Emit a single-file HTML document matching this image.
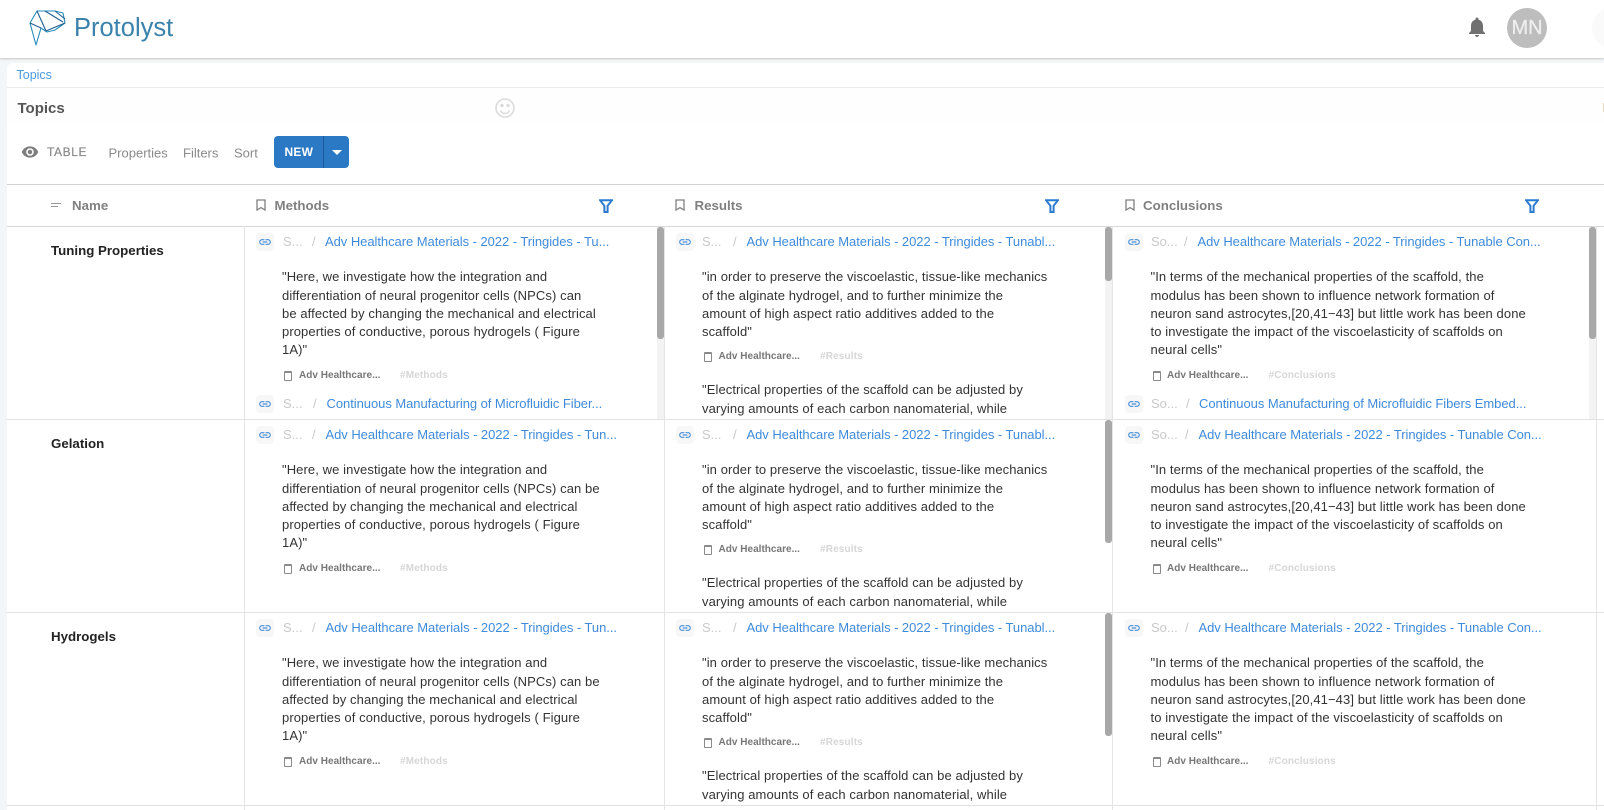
<!DOCTYPE html>
<html><head><meta charset="utf-8"><title>Protolyst</title>
<style>
html,body{margin:0;padding:0;width:1604px;height:810px;overflow:hidden;background:#f3f6f8;font-family:"Liberation Sans",Arial,sans-serif}
.a,.r span,.r i{position:absolute;white-space:nowrap}
#top{position:absolute;left:0;top:0;width:1604px;height:58px;background:#fff;box-shadow:0 1px 2px rgba(0,0,0,.2)}
#card{position:absolute;left:7px;top:63px;width:1597px;height:747px;background:#fff;border-top-left-radius:6px}
.h{position:absolute;height:1px;left:7px;width:1597px}
.v{position:absolute;width:1px;background:#e4e4e4;top:226px;height:584px}
.r{position:absolute;left:0;width:1604px;height:192px;overflow:hidden}
.chip{width:18px;height:18px;background:#f7f7f7;border-radius:4px;top:6px}
.chip svg{position:absolute;left:2px;top:2px;width:14px;height:14px;fill:#4a90d9}
.so{top:6px;line-height:18px;font-size:13px;color:#c9c9c9}
.l{top:6px;line-height:18px;font-size:13px;color:#3f8bdb;letter-spacing:-.05px}
.q{line-height:18px;font-size:13px;color:#333;letter-spacing:.09px}
.m{line-height:14px;font-size:10px;font-weight:bold;color:#777;letter-spacing:.02px;margin-top:1px}
.t{line-height:14px;font-size:10px;font-weight:bold;color:#d6d6d6;letter-spacing:.15px;margin-top:1px}
.sb{width:7px;background:#a8a8a8;border-radius:3px;top:0}
.tr{width:7px;background:#f3f3f3;top:0;height:192px}
.n{left:51px;top:15px;line-height:18px;font-size:13.3px;font-weight:bold;color:#222}
.bi{width:8px;height:10px;border:1px solid #8a8a8a;border-top:2px solid #8a8a8a;border-radius:1px;box-sizing:border-box;margin-top:1px}
.th{position:absolute;top:197px;line-height:18px;font-size:13.3px;font-weight:bold;color:#808080}
.tb{position:absolute;top:153px;transform:translateY(-50%);font-size:13px;color:#8a8a8a;white-space:nowrap}
svg{display:block}
</style></head><body>
<svg width="0" height="0" style="position:absolute"><defs>
<symbol id="lk" viewBox="0 0 24 24"><path d="M3.9 12c0-1.71 1.39-3.1 3.1-3.1h4V7H7c-2.76 0-5 2.24-5 5s2.24 5 5 5h4v-1.9H7c-1.71 0-3.1-1.39-3.1-3.1zM8 13h8v-2H8v2zm9-6h-4v1.9h4c1.71 0 3.1 1.39 3.1 3.1s-1.39 3.1-3.1 3.1h-4V17h4c2.76 0 5-2.24 5-5s-2.24-5-5-5z"/></symbol>
<symbol id="fl" viewBox="0 0 14 14"><path d="M1 1.2H13L8.6 6.8V13H5.4V6.8Z" fill="none" stroke="#2b7bd0" stroke-width="2"/></symbol>
<symbol id="bm" viewBox="0 0 10 12"><path d="M1 1H9V11L5 8.6 1 11Z" fill="none" stroke="#808080" stroke-width="1.3"/></symbol>
</defs></svg>

<div id="top">
<svg class="a" style="left:28px;top:8px" width="40" height="40" viewBox="28 8 40 40" fill="none" stroke-width="1.1" stroke-linejoin="round">
<path d="M30 23 37 11 55 11 63 13 65 23 55 30 47 32 41 28 36 45Z" stroke="#2a8dbb"/>
<path d="M37 11 46 31 65 23M30 23 41 28M45 11 63 22M55 11 65 19" stroke="#1f5f92"/>
</svg>
<div class="a" style="left:74px;top:12px;line-height:32px;font-size:25.5px;color:#3b82ad">Protolyst</div>
<svg class="a" style="left:1465px;top:15px" width="24" height="24" viewBox="0 0 24 24" fill="#707070"><path d="M12 22c1.1 0 2-.9 2-2h-4c0 1.1.9 2 2 2zm6-6v-5c0-3.07-1.63-5.64-4.5-6.32V4c0-.83-.67-1.5-1.5-1.5s-1.5.67-1.5 1.5v.68C7.64 5.36 6 7.92 6 11v5l-2 2v1h16v-1l-2-2z"/></svg>
<div class="a" style="left:1507px;top:8px;width:40px;height:40px;border-radius:50%;background:#bdbdbd;color:#eee;font-size:20px;line-height:40px;text-align:center;-webkit-text-stroke:.3px #eee">MN</div>
<div class="a" style="left:1592px;top:8px;width:40px;height:40px;border-radius:50%;background:#fafafa"></div>
</div>

<div id="card"></div>
<div class="a" style="left:16.5px;top:66px;line-height:18px;font-size:12.5px;color:#4a9ae0">Topics</div>
<div class="h" style="top:87px;background:#ececec"></div>
<div class="a" style="left:7px;top:88px;width:1597px;height:38px;background:#fefefe"></div>
<div class="a" style="left:17.5px;top:99px;line-height:20px;font-size:15px;font-weight:bold;color:#555">Topics</div>
<svg class="a" style="left:495px;top:98px" width="20" height="20" viewBox="0 0 20 20" fill="none" stroke="#dcdcdc" stroke-width="1.6"><circle cx="10" cy="10" r="9"/><path d="M5.5 12.5c1 2 2.6 3 4.5 3s3.5-1 4.5-3" /><circle cx="7" cy="7.5" r=".9" fill="#dcdcdc"/><circle cx="13" cy="7.5" r=".9" fill="#dcdcdc"/></svg>
<div class="a" style="left:1603px;top:103px;width:1px;height:9px;background:#eed9c4"></div>

<svg class="a" style="left:21px;top:143px" width="18" height="18" viewBox="0 0 24 24" fill="#7d7d7d"><path d="M12 4.5C7 4.5 2.73 7.61 1 12c1.73 4.39 6 7.5 11 7.5s9.27-3.11 11-7.5c-1.73-4.39-6-7.5-11-7.5zM12 17c-2.76 0-5-2.24-5-5s2.24-5 5-5 5 2.24 5 5-2.24 5-5 5zm0-8c-1.66 0-3 1.34-3 3s1.34 3 3 3 3-1.34 3-3-1.34-3-3-3z"/></svg>
<div class="tb" style="left:47px;top:152px;font-size:12px;letter-spacing:.6px;-webkit-text-stroke:.2px #8a8a8a">TABLE</div>
<div class="tb" style="left:108.5px">Properties</div>
<div class="tb" style="left:183px">Filters</div>
<div class="tb" style="left:234px">Sort</div>
<div class="a" style="left:274px;top:136px;width:75px;height:32px;background:#2b78c5;border-radius:4px"></div>
<div class="a" style="left:323px;top:136px;width:1px;height:32px;background:#1c5a9b"></div>
<div class="a" style="left:284.5px;top:136px;line-height:32px;font-size:12px;font-weight:bold;color:#fff;letter-spacing:.02em">NEW</div>
<div class="a" style="left:332px;top:150px;width:0;height:0;border-left:5px solid transparent;border-right:5px solid transparent;border-top:5px solid #fff"></div>
<div class="h" style="top:184px;background:#d2d2d2"></div>

<div class="a" style="left:51px;top:203px;width:10px;height:1px;background:#999"></div>
<div class="a" style="left:51px;top:206px;width:7px;height:1px;background:#999"></div>
<div class="th" style="left:72px">Name</div>
<svg class="a" style="left:256px;top:199px" width="10" height="12"><use href="#bm"/></svg>
<div class="th" style="left:274.5px">Methods</div>
<svg class="a" style="left:599px;top:199px" width="14" height="14"><use href="#fl"/></svg>
<svg class="a" style="left:675px;top:199px" width="10" height="12"><use href="#bm"/></svg>
<div class="th" style="left:694.5px">Results</div>
<svg class="a" style="left:1045px;top:199px" width="14" height="14"><use href="#fl"/></svg>
<svg class="a" style="left:1125px;top:199px" width="10" height="12"><use href="#bm"/></svg>
<div class="th" style="left:1143px">Conclusions</div>
<svg class="a" style="left:1525px;top:199px" width="14" height="14"><use href="#fl"/></svg>
<div class="h" style="top:226px;background:#d8d8d8"></div>

<!-- ROW 1 -->
<div class="r" style="top:227px">
<span class="n">Tuning Properties</span>
<i class="tr" style="left:657px"></i><i class="sb" style="left:657px;height:112px"></i>
<i class="chip" style="left:256px"><svg><use href="#lk"/></svg></i><span class="so" style="left:283px">S...</span><span class="so" style="left:312px">/</span><span class="l" style="left:325px">Adv Healthcare Materials - 2022 - Tringides - Tu...</span>
<span class="q" style="left:282px;top:41px">"Here, we investigate how the integration and</span>
<span class="q" style="left:282px;top:60px">differentiation of neural progenitor cells (NPCs) can</span>
<span class="q" style="left:282px;top:78px">be affected by changing the mechanical and electrical</span>
<span class="q" style="left:282px;top:96px">properties of conductive, porous hydrogels ( Figure</span>
<span class="q" style="left:282px;top:114px">1A)"</span>
<i class="bi" style="left:284px;top:143px"></i><span class="m" style="left:299px;top:141px">Adv Healthcare...</span><span class="t" style="left:400px;top:141px">#Methods</span>
<i class="chip" style="left:256px;top:168px"><svg><use href="#lk"/></svg></i><span class="so" style="left:283px;top:168px">S...</span><span class="so" style="left:313px;top:168px">/</span><span class="l" style="left:326.5px;top:168px">Continuous Manufacturing of Microfluidic Fiber...</span>

<i class="tr" style="left:1105px"></i><i class="sb" style="left:1105px;height:54px"></i>
<i class="chip" style="left:676px"><svg><use href="#lk"/></svg></i><span class="so" style="left:702px">S...</span><span class="so" style="left:733px">/</span><span class="l" style="left:746.5px">Adv Healthcare Materials - 2022 - Tringides - Tunabl...</span>
<span class="q" style="left:702px;top:41px">"in order to preserve the viscoelastic, tissue-like mechanics</span>
<span class="q" style="left:702px;top:60px">of the alginate hydrogel, and to further minimize the</span>
<span class="q" style="left:702px;top:78px">amount of high aspect ratio additives added to the</span>
<span class="q" style="left:702px;top:96px">scaffold"</span>
<i class="bi" style="left:704px;top:124px"></i><span class="m" style="left:718.5px;top:122px">Adv Healthcare...</span><span class="t" style="left:820px;top:122px">#Results</span>
<span class="q" style="left:702px;top:154px">"Electrical properties of the scaffold can be adjusted by</span>
<span class="q" style="left:702px;top:173px">varying amounts of each carbon nanomaterial, while</span>

<i class="tr" style="left:1589px"></i><i class="sb" style="left:1589px;height:112px"></i>
<i class="chip" style="left:1125px"><svg><use href="#lk"/></svg></i><span class="so" style="left:1151px">So...</span><span class="so" style="left:1184px">/</span><span class="l" style="left:1197.5px">Adv Healthcare Materials - 2022 - Tringides - Tunable Con...</span>
<span class="q" style="left:1150.5px;top:41px">"In terms of the mechanical properties of the scaffold, the</span>
<span class="q" style="left:1150.5px;top:60px">modulus has been shown to influence network formation of</span>
<span class="q" style="left:1150.5px;top:78px">neuron sand astrocytes,[20,41−43] but little work has been done</span>
<span class="q" style="left:1150.5px;top:96px">to investigate the impact of the viscoelasticity of scaffolds on</span>
<span class="q" style="left:1150.5px;top:114px">neural cells"</span>
<i class="bi" style="left:1153px;top:143px"></i><span class="m" style="left:1167px;top:141px">Adv Healthcare...</span><span class="t" style="left:1268.5px;top:141px">#Conclusions</span>
<i class="chip" style="left:1125px;top:168px"><svg><use href="#lk"/></svg></i><span class="so" style="left:1151px;top:168px">So...</span><span class="so" style="left:1186px;top:168px">/</span><span class="l" style="left:1199px;top:168px">Continuous Manufacturing of Microfluidic Fibers Embed...</span>
</div>
<div class="h" style="top:419px;background:#e2e2e2"></div>

<!-- ROW 2 -->
<div class="r" style="top:420px">
<span class="n">Gelation</span>
<i class="chip" style="left:256px"><svg><use href="#lk"/></svg></i><span class="so" style="left:283px">S...</span><span class="so" style="left:312px">/</span><span class="l" style="left:325.5px">Adv Healthcare Materials - 2022 - Tringides - Tun...</span>
<span class="q" style="left:282px;top:41px">"Here, we investigate how the integration and</span>
<span class="q" style="left:282px;top:60px">differentiation of neural progenitor cells (NPCs) can be</span>
<span class="q" style="left:282px;top:78px">affected by changing the mechanical and electrical</span>
<span class="q" style="left:282px;top:96px">properties of conductive, porous hydrogels ( Figure</span>
<span class="q" style="left:282px;top:114px">1A)"</span>
<i class="bi" style="left:284px;top:143px"></i><span class="m" style="left:299px;top:141px">Adv Healthcare...</span><span class="t" style="left:400px;top:141px">#Methods</span>

<i class="sb" style="left:1105px;height:123px"></i>
<i class="chip" style="left:676px"><svg><use href="#lk"/></svg></i><span class="so" style="left:702px">S...</span><span class="so" style="left:733px">/</span><span class="l" style="left:746.5px">Adv Healthcare Materials - 2022 - Tringides - Tunabl...</span>
<span class="q" style="left:702px;top:41px">"in order to preserve the viscoelastic, tissue-like mechanics</span>
<span class="q" style="left:702px;top:60px">of the alginate hydrogel, and to further minimize the</span>
<span class="q" style="left:702px;top:78px">amount of high aspect ratio additives added to the</span>
<span class="q" style="left:702px;top:96px">scaffold"</span>
<i class="bi" style="left:704px;top:124px"></i><span class="m" style="left:718.5px;top:122px">Adv Healthcare...</span><span class="t" style="left:820px;top:122px">#Results</span>
<span class="q" style="left:702px;top:154px">"Electrical properties of the scaffold can be adjusted by</span>
<span class="q" style="left:702px;top:173px">varying amounts of each carbon nanomaterial, while</span>

<i class="chip" style="left:1125px"><svg><use href="#lk"/></svg></i><span class="so" style="left:1151px">So...</span><span class="so" style="left:1185px">/</span><span class="l" style="left:1198.5px">Adv Healthcare Materials - 2022 - Tringides - Tunable Con...</span>
<span class="q" style="left:1150.5px;top:41px">"In terms of the mechanical properties of the scaffold, the</span>
<span class="q" style="left:1150.5px;top:60px">modulus has been shown to influence network formation of</span>
<span class="q" style="left:1150.5px;top:78px">neuron sand astrocytes,[20,41−43] but little work has been done</span>
<span class="q" style="left:1150.5px;top:96px">to investigate the impact of the viscoelasticity of scaffolds on</span>
<span class="q" style="left:1150.5px;top:114px">neural cells"</span>
<i class="bi" style="left:1153px;top:143px"></i><span class="m" style="left:1167px;top:141px">Adv Healthcare...</span><span class="t" style="left:1268.5px;top:141px">#Conclusions</span>
</div>
<div class="h" style="top:612px;background:#e2e2e2"></div>

<!-- ROW 3 -->
<div class="r" style="top:613px">
<span class="n">Hydrogels</span>
<i class="chip" style="left:256px"><svg><use href="#lk"/></svg></i><span class="so" style="left:283px">S...</span><span class="so" style="left:312px">/</span><span class="l" style="left:325.5px">Adv Healthcare Materials - 2022 - Tringides - Tun...</span>
<span class="q" style="left:282px;top:41px">"Here, we investigate how the integration and</span>
<span class="q" style="left:282px;top:60px">differentiation of neural progenitor cells (NPCs) can be</span>
<span class="q" style="left:282px;top:78px">affected by changing the mechanical and electrical</span>
<span class="q" style="left:282px;top:96px">properties of conductive, porous hydrogels ( Figure</span>
<span class="q" style="left:282px;top:114px">1A)"</span>
<i class="bi" style="left:284px;top:143px"></i><span class="m" style="left:299px;top:141px">Adv Healthcare...</span><span class="t" style="left:400px;top:141px">#Methods</span>

<i class="sb" style="left:1105px;height:123px"></i>
<i class="chip" style="left:676px"><svg><use href="#lk"/></svg></i><span class="so" style="left:702px">S...</span><span class="so" style="left:733px">/</span><span class="l" style="left:746.5px">Adv Healthcare Materials - 2022 - Tringides - Tunabl...</span>
<span class="q" style="left:702px;top:41px">"in order to preserve the viscoelastic, tissue-like mechanics</span>
<span class="q" style="left:702px;top:60px">of the alginate hydrogel, and to further minimize the</span>
<span class="q" style="left:702px;top:78px">amount of high aspect ratio additives added to the</span>
<span class="q" style="left:702px;top:96px">scaffold"</span>
<i class="bi" style="left:704px;top:124px"></i><span class="m" style="left:718.5px;top:122px">Adv Healthcare...</span><span class="t" style="left:820px;top:122px">#Results</span>
<span class="q" style="left:702px;top:154px">"Electrical properties of the scaffold can be adjusted by</span>
<span class="q" style="left:702px;top:173px">varying amounts of each carbon nanomaterial, while</span>

<i class="chip" style="left:1125px"><svg><use href="#lk"/></svg></i><span class="so" style="left:1151px">So...</span><span class="so" style="left:1185px">/</span><span class="l" style="left:1198.5px">Adv Healthcare Materials - 2022 - Tringides - Tunable Con...</span>
<span class="q" style="left:1150.5px;top:41px">"In terms of the mechanical properties of the scaffold, the</span>
<span class="q" style="left:1150.5px;top:60px">modulus has been shown to influence network formation of</span>
<span class="q" style="left:1150.5px;top:78px">neuron sand astrocytes,[20,41−43] but little work has been done</span>
<span class="q" style="left:1150.5px;top:96px">to investigate the impact of the viscoelasticity of scaffolds on</span>
<span class="q" style="left:1150.5px;top:114px">neural cells"</span>
<i class="bi" style="left:1153px;top:143px"></i><span class="m" style="left:1167px;top:141px">Adv Healthcare...</span><span class="t" style="left:1268.5px;top:141px">#Conclusions</span>
</div>
<div class="h" style="top:805px;background:#e2e2e2"></div>

<div class="v" style="left:244px"></div>
<div class="v" style="left:664px"></div>
<div class="v" style="left:1112px"></div>
<div class="v" style="left:1596px"></div>
</body></html>
